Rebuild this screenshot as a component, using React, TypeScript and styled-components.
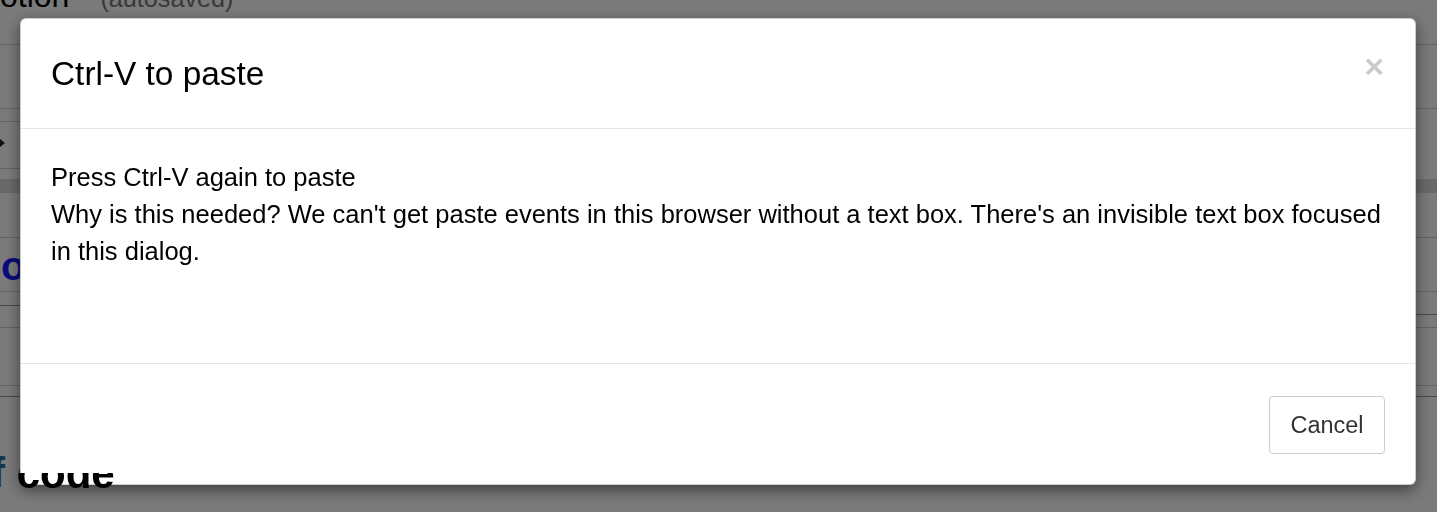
import React from "react";
import styled, { createGlobalStyle } from "styled-components";

const Global = createGlobalStyle`
  html, body { margin: 0; padding: 0; background: #fff; }
  body { font-family: "Liberation Sans", Arial, Helvetica, sans-serif; overflow: hidden; }
  * { box-sizing: border-box; }
`;

/* ---------- page underneath the dialog ---------- */

const Page = styled.div`
  height: 512px;
  overflow: hidden;
  background: #fff;
  color: #000;
`;

const TitleRow = styled.div`
  display: flow-root;
  height: 44px;
`;

const TitleLine = styled.div`
  display: flex;
  align-items: baseline;
  gap: 31px;
  margin-top: -20px;
`;

const PageTitle = styled.span`
  font-size: 32px;
  line-height: 32px;
  color: #000;
`;

const Autosaved = styled.span`
  font-size: 25.2px;
  line-height: 32px;
  color: #777;
`;

type Tone = "light" | "dark";
type Span = "full" | "left" | "right";

const Rule = styled.div<{ $gap: number; $tone?: Tone; $span?: Span }>`
  height: 1px;
  margin-top: ${(p) => p.$gap}px;
  background: ${(p) => (p.$tone === "dark" ? "#9a9a9a" : "#cdcdcd")};
  width: ${(p) => (p.$span && p.$span !== "full" ? "40px" : "100%")};
  margin-left: ${(p) => (p.$span === "right" ? "auto" : "0")};
`;

const Band = styled.div<{ $gap: number }>`
  height: 14px;
  margin-top: ${(p) => p.$gap}px;
  background: #dcdcdc;
`;

const Caret = styled.div<{ $gap: number }>`
  width: 0;
  height: 0;
  margin-top: ${(p) => p.$gap}px;
  border-left: 5px solid #222;
  border-top: 4px solid transparent;
  border-bottom: 4px solid transparent;
`;

const LinkWord = styled.div<{ $gap: number }>`
  margin-top: ${(p) => p.$gap}px;
  margin-left: 1px;
  font-size: 40px;
  line-height: 40px;
  font-weight: bold;
  color: #1616ff;
`;

const SectionHeading = styled.div<{ $gap: number }>`
  margin-top: ${(p) => p.$gap}px;
  margin-left: -9px;
  font-size: 42px;
  line-height: 42px;
  font-weight: bold;
  color: #28739c;
  white-space: nowrap;
`;

/* ---------- dialog ---------- */

const Backdrop = styled.div`
  position: fixed;
  inset: 0;
  background: rgba(0, 0, 0, 0.52);
  z-index: 10;
`;

const ModalLayer = styled.div`
  position: fixed;
  inset: 0;
  z-index: 11;
  padding: 18px 21px 0 20px;
`;

const Dialog = styled.div`
  background: #fff;
  border: 1px solid rgba(0, 0, 0, 0.2);
  border-radius: 6px;
  box-shadow: 0 5px 15px rgba(0, 0, 0, 0.5);
  color: #000;
`;

const Header = styled.div`
  display: flex;
  align-items: flex-start;
  justify-content: space-between;
  padding: 30px;
  border-bottom: 1px solid #e5e5e5;
`;

const Title = styled.h4`
  margin: 0;
  font-size: 33.4px;
  line-height: 49px;
  font-weight: normal;
`;

const Close = styled.button`
  border: 0;
  background: transparent;
  padding: 0;
  margin: 0 1px 0 0;
  font-family: inherit;
  font-size: 34px;
  line-height: 1;
  font-weight: bold;
  color: #000;
  opacity: 0.2;
  cursor: pointer;
`;

const Body = styled.div`
  padding: 30px 30px 30px;
  font-size: 25.5px;
  line-height: 37px;
`;

const Line = styled.div``;

const PasteTarget = styled.textarea`
  display: block;
  width: 100%;
  height: 63px;
  border: 0;
  padding: 0;
  margin: 0;
  resize: none;
  opacity: 0;
  outline: none;
`;

const Footer = styled.div`
  display: flex;
  justify-content: flex-end;
  padding: 32px 30px 30px;
  border-top: 1px solid #e5e5e5;
`;

const Button = styled.button`
  width: 116px;
  height: 58px;
  padding: 0;
  font-family: inherit;
  font-size: 23.5px;
  line-height: 36px;
  color: #333;
  background: #fff;
  border: 1px solid #ccc;
  border-radius: 4px;
  cursor: pointer;
`;

/* fragment of the page heading that shows above the dialog's lower edge */
const HeadingFragment = styled.div`
  position: fixed;
  left: 16px;
  top: 473px;
  width: 110px;
  height: 18px;
  overflow: hidden;
  z-index: 12;
  pointer-events: none;
`;

const FragmentText = styled.div`
  margin-top: -20.5px;
  margin-left: 0.7px;
  font-size: 42px;
  line-height: 42px;
  font-weight: bold;
  color: #000;
  white-space: nowrap;
`;

export default function App() {
  return (
    <>
      <Global />
      <Page>
        <TitleRow>
          <TitleLine>
            <PageTitle>otion</PageTitle>
            <Autosaved>(autosaved)</Autosaved>
          </TitleLine>
        </TitleRow>
        <Rule $gap={0} />
        <Rule $gap={63} />
        <Rule $gap={12} $span="left" />
        <Caret $gap={17} />
        <Rule $gap={21} $span="left" />
        <Band $gap={10} />
        <Rule $gap={44} />
        <LinkWord $gap={8}>o</LinkWord>
        <Rule $gap={5} />
        <Rule $gap={13} $tone="dark" $span="left" />
        <Rule $gap={8} $tone="dark" $span="right" />
        <Rule $gap={12} />
        <Rule $gap={57} />
        <Rule $gap={10} $tone="dark" />
        <SectionHeading $gap={55}>f code</SectionHeading>
      </Page>

      <Backdrop />
      <ModalLayer>
        <Dialog role="dialog" aria-labelledby="paste-title">
          <Header>
            <Title id="paste-title">Ctrl-V to paste</Title>
            <Close aria-label="Close">×</Close>
          </Header>
          <Body>
            <Line>Press Ctrl-V again to paste</Line>
            <Line>
              Why is this needed? We can't get paste events in this browser without a text box.
              There's an invisible text box focused in this dialog.
            </Line>
            <PasteTarget aria-label="Paste here" />
          </Body>
          <Footer>
            <Button>Cancel</Button>
          </Footer>
        </Dialog>
      </ModalLayer>
      <HeadingFragment>
        <FragmentText>code</FragmentText>
      </HeadingFragment>
    </>
  );
}
